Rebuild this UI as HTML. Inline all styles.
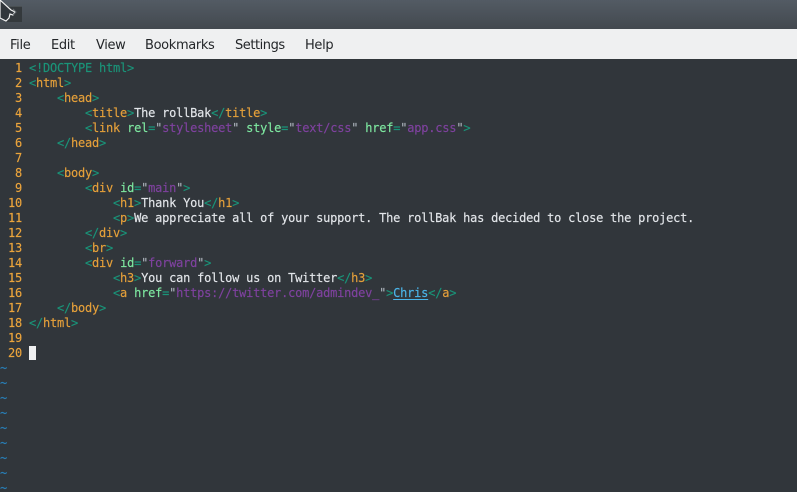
<!DOCTYPE html>
<html>
<head>
<meta charset="utf-8">
<style>
html,body{margin:0;padding:0;width:797px;height:492px;overflow:hidden;background:#31363b}
#title{position:absolute;left:0;top:0;width:797px;height:29px;background:linear-gradient(#535b64,#43494f)}
#btn{position:absolute;left:6px;top:6px;width:16px;height:16px;background:#34393c;border-top:1px solid #4a5053;box-sizing:border-box}
#menu{position:absolute;left:0;top:29px;width:797px;height:30px;background:#eff0f1}
#menu span{position:absolute;top:8px;font:13px/17px "DejaVu Sans",sans-serif;color:#232629;letter-spacing:-0.35px;white-space:nowrap}
#ed{position:absolute;left:0;top:59px;width:797px;height:433px;background:#31363b;overflow:hidden}
pre{position:absolute;margin:0;left:29px;top:2px;font:12px/15px "DejaVu Sans Mono",monospace;letter-spacing:-0.224px;color:#e3e6ea;-webkit-text-stroke:0.15px}
#nums{position:absolute;left:0;top:2px;width:22px;text-align:right;font:12px/15px "DejaVu Sans Mono",monospace;letter-spacing:-0.224px;color:#eba43c;white-space:pre;-webkit-text-stroke:0.15px}
#tilde{position:absolute;left:0;top:302px;font:12px/15px "DejaVu Sans Mono",monospace;letter-spacing:-0.224px;color:#2980b9;white-space:pre;-webkit-text-stroke:0.15px}
.t{color:#1a9479}
.n{color:#e5a03a}
.a{color:#7ee8a0}
.s{color:#7f429f}
.q{color:#a9b0b8}
.l{color:#4bb5ea;text-decoration:underline;text-underline-offset:2px}
#cur{position:absolute;left:29px;top:287px;width:7px;height:14px;background:#eff0f1}
</style>
</head>
<body>
<div id="title"><div id="btn"></div>
<svg style="position:absolute;left:0;top:0" width="24" height="24" viewBox="0 0 24 24">
<path d="M0 0 L11 10 L15 12 L13 15 L10 14 L9 18 L6 21 L0 18 Z" fill="#31363b" stroke="#f2f2f2" stroke-width="1.2"/>
<path d="M13 9 L16 12 L13 15" fill="none" stroke="#6a7074" stroke-width="1"/>
</svg>
</div>
<div id="menu">
<span style="left:10px">File</span>
<span style="left:51px">Edit</span>
<span style="left:96px">View</span>
<span style="left:145px">Bookmarks</span>
<span style="left:235px;letter-spacing:-0.45px">Settings</span>
<span style="left:305px">Help</span>
</div>
<div id="ed">
<div id="nums">1
2
3
4
5
6
7
8
9
10
11
12
13
14
15
16
17
18
19
20</div>
<pre><span class="t">&lt;!DOCTYPE html&gt;</span>
<span class="t">&lt;</span><span class="n">html</span><span class="t">&gt;</span>
    <span class="t">&lt;</span><span class="n">head</span><span class="t">&gt;</span>
        <span class="t">&lt;</span><span class="n">title</span><span class="t">&gt;</span>The rollBak<span class="t">&lt;/</span><span class="n">title</span><span class="t">&gt;</span>
        <span class="t">&lt;</span><span class="n">link</span> <span class="a">rel</span><span class="t">=</span><span class="q">"</span><span class="s">stylesheet</span><span class="q">"</span> <span class="a">style</span><span class="t">=</span><span class="q">"</span><span class="s">text/css</span><span class="q">"</span> <span class="a">href</span><span class="t">=</span><span class="q">"</span><span class="s">app.css</span><span class="q">"</span><span class="t">&gt;</span>
    <span class="t">&lt;/</span><span class="n">head</span><span class="t">&gt;</span>

    <span class="t">&lt;</span><span class="n">body</span><span class="t">&gt;</span>
        <span class="t">&lt;</span><span class="n">div</span> <span class="a">id</span><span class="t">=</span><span class="q">"</span><span class="s">main</span><span class="q">"</span><span class="t">&gt;</span>
            <span class="t">&lt;</span><span class="n">h1</span><span class="t">&gt;</span>Thank You<span class="t">&lt;/</span><span class="n">h1</span><span class="t">&gt;</span>
            <span class="t">&lt;</span><span class="n">p</span><span class="t">&gt;</span>We appreciate all of your support. The rollBak has decided to close the project.
        <span class="t">&lt;/</span><span class="n">div</span><span class="t">&gt;</span>
        <span class="t">&lt;</span><span class="n">br</span><span class="t">&gt;</span>
        <span class="t">&lt;</span><span class="n">div</span> <span class="a">id</span><span class="t">=</span><span class="q">"</span><span class="s">forward</span><span class="q">"</span><span class="t">&gt;</span>
            <span class="t">&lt;</span><span class="n">h3</span><span class="t">&gt;</span>You can follow us on Twitter<span class="t">&lt;/</span><span class="n">h3</span><span class="t">&gt;</span>
            <span class="t">&lt;</span><span class="n">a</span> <span class="a">href</span><span class="t">=</span><span class="q">"</span><span class="s">https://twitter.com/admindev_</span><span class="q">"</span><span class="t">&gt;</span><span class="l">Chris</span><span class="t">&lt;/</span><span class="n">a</span><span class="t">&gt;</span>
    <span class="t">&lt;/</span><span class="n">body</span><span class="t">&gt;</span>
<span class="t">&lt;/</span><span class="n">html</span><span class="t">&gt;</span></pre>
<div id="cur"></div>
<div id="tilde">~
~
~
~
~
~
~
~
~</div>
</div>
</body>
</html>
